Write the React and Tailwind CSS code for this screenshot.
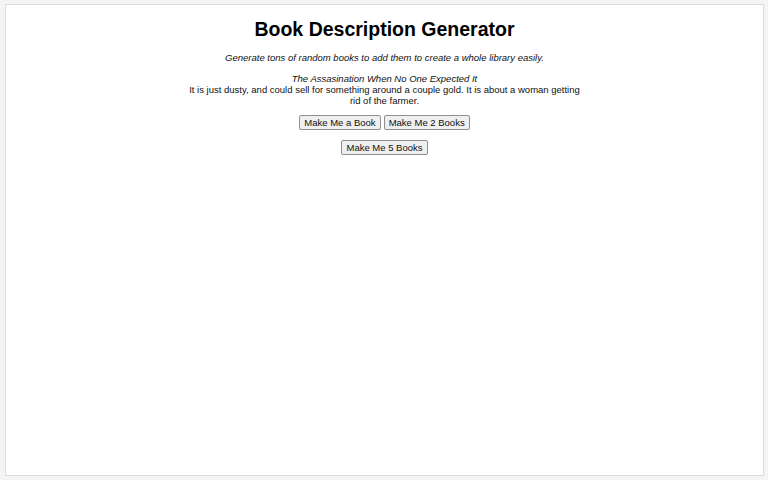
const BOOK = {
  title: "The Assasination When No One Expected It",
  blurb:
    "It is just dusty, and could sell for something around a couple gold. It is about a woman getting rid of the farmer.",
};

const Btn = ({ children }) => (
  <button className="h-[15px] px-[4px] bg-[#efefef] border border-[#8f8f8f] rounded-[2px] text-[9.5px] leading-none text-[#111]">
    {children}
  </button>
);

export default function App() {
  return (
    <div
      className="w-[768px] h-[480px] bg-[#f4f4f4] pt-[4px] pl-[5px] pr-[4px] pb-[4px]"
      style={{ fontFamily: '"Liberation Sans", Arial, sans-serif' }}
    >
      <div className="h-full bg-white border border-[#dcdcdc] flex flex-col items-center text-[#111]">
        <h1 className="mt-[12px] text-[19.5px] leading-[24px] font-bold text-black">
          Book Description Generator
        </h1>
        <p className="mt-[11px] text-[9.5px] leading-[11px] italic">
          Generate tons of random books to add them to create a whole library easily.
        </p>
        <div className="mt-[10px] w-[400px] text-center text-[9.5px] leading-[11px]">
          <div className="italic">{BOOK.title}</div>
          <div>{BOOK.blurb}</div>
        </div>
        <div className="mt-[9px] flex gap-[3px]">
          <Btn>Make Me a Book</Btn>
          <Btn>Make Me 2 Books</Btn>
        </div>
        <div className="mt-[10px] flex">
          <Btn>Make Me 5 Books</Btn>
        </div>
      </div>
    </div>
  );
}
